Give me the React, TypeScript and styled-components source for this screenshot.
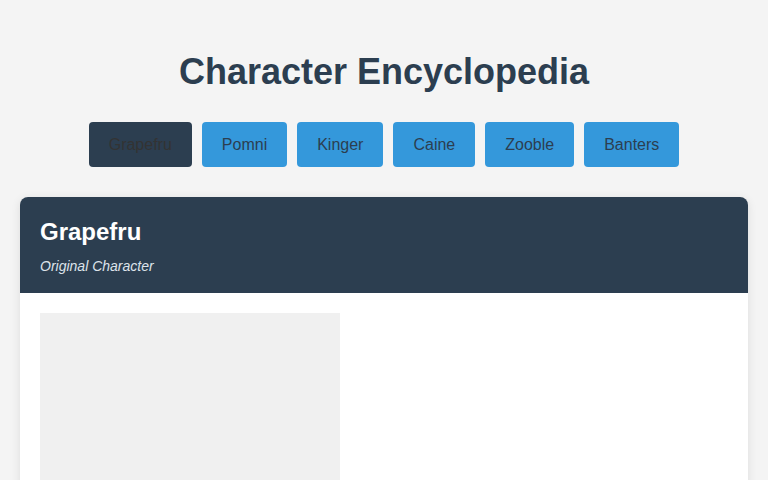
import React, { useState } from "react";
import styled, { createGlobalStyle } from "styled-components";

const GlobalStyle = createGlobalStyle`
  html, body { margin: 0; padding: 0; }
  body {
    background: #f4f4f4;
    font-family: "Liberation Sans", Arial, sans-serif;
    color: #333;
  }
`;

const Page = styled.div`
  padding: 20px;
`;

const Title = styled.h1`
  margin: 30px 0 29px;
  text-align: center;
  font-size: 36px;
  line-height: 43px;
  font-weight: bold;
  color: #2c3e50;
`;

const Tabs = styled.div`
  display: flex;
  justify-content: center;
  gap: 10px;
  margin-bottom: 30px;
`;

const Tab = styled.button<{ $active: boolean }>`
  border: none;
  border-radius: 4px;
  padding: 10px 20px;
  font-family: "Liberation Sans", Arial, sans-serif;
  font-size: 16px;
  line-height: 25px;
  cursor: pointer;
  background: ${(p) => (p.$active ? "#2c3e50" : "#3498db")};
  color: ${(p) => (p.$active ? "#333" : "#2c3e50")};
`;

const Card = styled.div`
  background: #fff;
  border-radius: 8px;
  overflow: hidden;
  box-shadow: 0 2px 10px rgba(0, 0, 0, 0.1);
`;

const CardHeader = styled.div`
  background: #2c3e50;
  color: #fff;
  padding: 20px 20px 18px;
`;

const Name = styled.h2`
  margin: 0 0 11px;
  font-size: 24px;
  line-height: 30px;
  font-weight: bold;
`;

const Subtitle = styled.p`
  margin: 0;
  font-size: 14px;
  line-height: 17px;
  font-style: italic;
  color: #dde3ea;
`;

const CardBody = styled.div`
  padding: 20px;
`;

const ImageBox = styled.div`
  width: 300px;
  height: 300px;
  background: #f0f0f0;
`;

const characters = ["Grapefru", "Pomni", "Kinger", "Caine", "Zooble", "Banters"];

export default function App() {
  const [active, setActive] = useState("Grapefru");
  return (
    <Page>
      <GlobalStyle />
      <Title>Character Encyclopedia</Title>
      <Tabs>
        {characters.map((c) => (
          <Tab key={c} $active={c === active} onClick={() => setActive(c)}>
            {c}
          </Tab>
        ))}
      </Tabs>
      <Card>
        <CardHeader>
          <Name>{active}</Name>
          <Subtitle>Original Character</Subtitle>
        </CardHeader>
        <CardBody>
          <ImageBox />
        </CardBody>
      </Card>
    </Page>
  );
}
